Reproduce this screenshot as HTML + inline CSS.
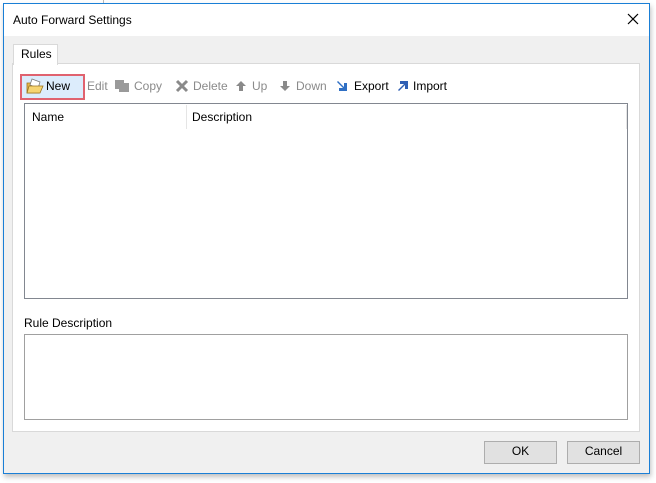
<!DOCTYPE html>
<html><head><style>
*{margin:0;padding:0;box-sizing:border-box}
body{width:656px;height:483px;background:#fff;position:relative;overflow:hidden;font-family:"Liberation Sans",sans-serif;font-size:12px;color:#000}
.abs{position:absolute}
#win{left:3px;top:3px;width:647px;height:471px;border:1px solid #1a7fd6;background:#f0f0f0;box-shadow:1px 3px 5px rgba(0,0,0,.25)}
#title{left:0;top:0;width:645px;height:32px;background:#fff}
.t{position:absolute;white-space:nowrap}
.gray{color:#8a8a8a}
.btn{position:absolute;background:#e1e1e1;border:1px solid #adadad;text-align:center;line-height:20px}
</style></head><body>
<div class="abs" style="left:103px;top:0;width:1px;height:4px;background:#bbb"></div>
<div id="win" class="abs">
 <div id="title" class="abs"></div>
 <div class="t" style="left:9px;top:9px;font-size:12px">Auto Forward Settings</div>
 <svg class="abs" style="left:623px;top:9px" width="12" height="12"><path d="M1 1L11 11M11 1L1 11" stroke="#000" stroke-width="1.2"/></svg>
 <div class="abs" style="left:8px;top:59px;width:628px;height:369px;background:#fff;border:1px solid #d9d9d9"></div>
 <div class="abs" style="left:9px;top:40px;width:45px;height:21px;background:#fff;border:1px solid #d9d9d9;border-bottom:none"></div>
 <div class="t" style="left:17px;top:43px">Rules</div>
 <div class="abs" style="left:16px;top:70px;width:65px;height:26px;border:2px solid #e0626f;background:#dcecfc"></div>
 <svg class="abs" style="left:22px;top:74px" width="18" height="16"><path d="M1 5h5l1 1h6v9H1z" fill="#e9b84a" stroke="#9a7420" stroke-width=".8"/><path d="M6 1l8 3-2 6-8-3z" fill="#fff" stroke="#777" stroke-width=".7"/><path d="M3 8h14l-3 7H1z" fill="#f6d471" stroke="#9a7420" stroke-width=".8"/></svg>
 <div class="t" style="left:42px;top:75px">New</div>
 <div class="t gray" style="left:83px;top:75px">Edit</div>
 <svg class="abs" style="left:110px;top:75px" width="16" height="14"><rect x="1" y="1" width="9" height="9" fill="#9a9a9a"/><rect x="5" y="4" width="10" height="9" fill="#9a9a9a"/></svg>
 <div class="t gray" style="left:130px;top:75px">Copy</div>
 <svg class="abs" style="left:171px;top:75px" width="14" height="14"><path d="M2 2L12 12M12 2L2 12" stroke="#8a8a8a" stroke-width="3"/></svg>
 <div class="t gray" style="left:189px;top:75px">Delete</div>
 <svg class="abs" style="left:231px;top:76px" width="12" height="12"><path d="M6 1L11 6H8v5H4V6H1z" fill="#8a8a8a"/></svg>
 <div class="t gray" style="left:248px;top:75px">Up</div>
 <svg class="abs" style="left:275px;top:76px" width="12" height="12"><path d="M6 11L11 6H8V1H4v5H1z" fill="#8a8a8a"/></svg>
 <div class="t gray" style="left:292px;top:75px">Down</div>
 <svg class="abs" style="left:332px;top:76px" width="13" height="12"><path d="M2 1l6 6V3h3v8H3V8h4L1 2z" fill="#2f6fc4"/></svg>
 <div class="t" style="left:350px;top:75px">Export</div>
 <svg class="abs" style="left:393px;top:76px" width="13" height="12"><path d="M11 1v8H8V5L2 11 1 10l6-6H3V1z" fill="#2f5fb4"/></svg>
 <div class="t" style="left:409px;top:75px">Import</div>
 <div class="abs" style="left:20px;top:99px;width:604px;height:196px;background:#fff;border:1px solid #828790"></div>
 <div class="abs" style="left:182px;top:101px;width:1px;height:24px;background:#e5e5e5"></div>
 <div class="abs" style="left:622px;top:101px;width:1px;height:24px;background:#e5e5e5"></div>
 <div class="t" style="left:28px;top:106px">Name</div>
 <div class="t" style="left:188px;top:106px">Description</div>
 <div class="t" style="left:20px;top:312px">Rule Description</div>
 <div class="abs" style="left:20px;top:330px;width:604px;height:86px;background:#fff;border:1px solid #a0a0a0"></div>
 <div class="btn" style="left:480px;top:437px;width:73px;height:23px;line-height:19px">OK</div>
 <div class="btn" style="left:563px;top:437px;width:73px;height:23px;line-height:19px">Cancel</div>
</div>
</body></html>
